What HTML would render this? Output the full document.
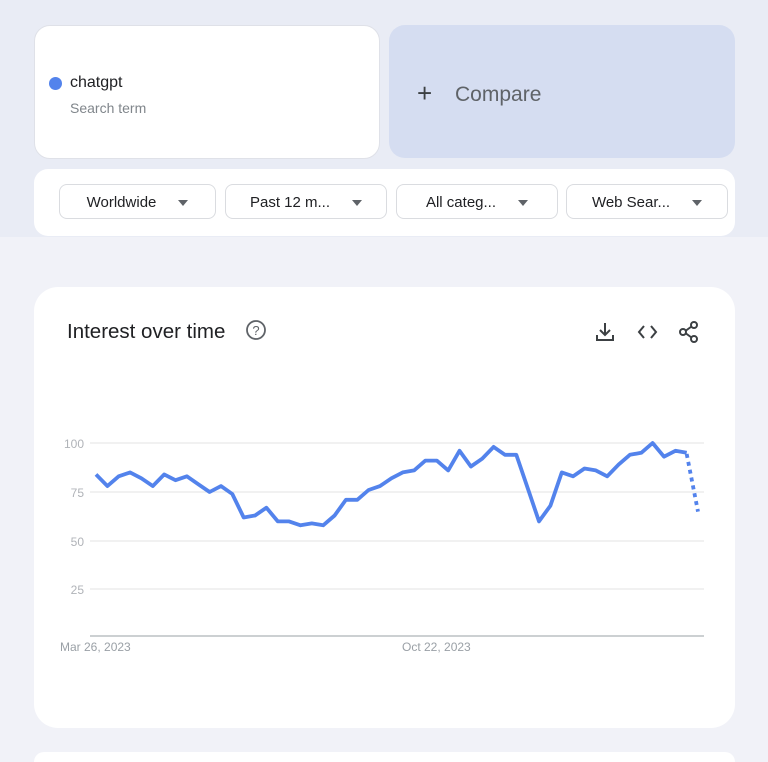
<!DOCTYPE html>
<html><head><meta charset="utf-8"><style>
body{margin:0;width:768px;height:757px;overflow:hidden;background:#f1f2f8;font-family:"Liberation Sans",sans-serif;position:relative}
.top{position:absolute;left:0;top:0;width:768px;height:237px;background:#e9ecf5}
.abs{position:absolute}
.card1{left:34px;top:25px;width:344px;height:132px;background:#fff;border:1px solid #dfe1e8;border-radius:16px}
.cmp{left:389px;top:25px;width:346px;height:133px;background:#d5ddf1;border-radius:16px}
.bar{left:34px;top:169px;width:701px;height:67px;background:#fff;border-radius:14px}
.chip{top:184px;height:35px;padding-top:2px;border:1px solid #dadce0;border-radius:8px;background:#fff;font-size:15px;color:#202124;display:flex;align-items:center;justify-content:center;box-sizing:border-box}
.chip i{display:inline-block;width:0;height:0;border-left:5px solid transparent;border-right:5px solid transparent;border-top:6px solid #5f6368;margin-left:22px}
.chart{left:34px;top:287px;width:701px;height:441px;background:#fff;border-radius:24px}
</style></head><body>
<div class="top"></div>
<div class="abs card1">
 <div class="abs" style="left:14px;top:51px;width:13px;height:13px;border-radius:50%;background:#5383ec"></div>
 <div class="abs" style="left:35px;top:48px;font-size:16px;color:#202124">chatgpt</div>
 <div class="abs" style="left:35px;top:74px;font-size:14px;color:#80868b">Search term</div>
</div>
<div class="abs cmp">
 <div class="abs" style="left:28px;top:55px;font-size:26px;color:#3c4043;line-height:26px;font-weight:300">+</div>
 <div class="abs" style="left:66px;top:58px;font-size:21px;color:#5f6368">Compare</div>
</div>
<div class="abs bar"></div>
<div class="abs chip" style="left:59px;width:157px">Worldwide<i></i></div>
<div class="abs chip" style="left:225px;width:162px">Past 12 m...<i></i></div>
<div class="abs chip" style="left:396px;width:162px">All categ...<i></i></div>
<div class="abs chip" style="left:566px;width:162px">Web Sear...<i></i></div>
<div class="abs chart"></div>
<div class="abs" style="left:34px;top:752px;width:701px;height:10px;background:#fff;border-radius:12px 12px 0 0"></div>
<div class="abs" style="left:67px;top:320px;font-size:20.5px;color:#202124">Interest over time</div>
<svg class="abs" style="left:0;top:0" width="768" height="757">
 <circle cx="256" cy="330" r="9" fill="none" stroke="#5f6368" stroke-width="1.8"/>
 <text x="256" y="335" font-size="13" fill="#5f6368" text-anchor="middle" font-family="Liberation Sans">?</text>
 <g stroke="#3c4043" stroke-width="2" fill="none">
  <path d="M605 323v12M600 330l5 5 5-5M597 335v5h16v-5"/>
  <path d="M644 326l-5 6 5 6M651 326l5 6-5 6"/>
  <circle cx="694" cy="325" r="3"/><circle cx="683" cy="332" r="3"/><circle cx="694" cy="339" r="3"/>
  <path d="M686 330.5l5.5-4M686 333.5l5.5 4"/>
 </g>
 <g stroke="#e3e3e3" stroke-width="1">
  <line x1="90" y1="443" x2="704" y2="443"/><line x1="90" y1="492" x2="704" y2="492"/>
  <line x1="90" y1="541" x2="704" y2="541"/><line x1="90" y1="589" x2="704" y2="589"/>
 </g>
 <line x1="90" y1="636" x2="704" y2="636" stroke="#9aa0a6" stroke-width="1"/>
 <g font-size="12" fill="#b0b3b8" font-family="Liberation Sans" text-anchor="end">
  <text x="84" y="448">100</text><text x="84" y="497">75</text><text x="84" y="546">50</text><text x="84" y="594">25</text>
 </g>
 <g font-size="12" fill="#9aa0a6" font-family="Liberation Sans">
  <text x="60" y="651">Mar 26, 2023</text><text x="402" y="651">Oct 22, 2023</text>
 </g>
 <polyline fill="none" stroke="#5383ec" stroke-width="3.8" stroke-linejoin="round" points="96,474.4 107.4,486.1 118.7,476.3 130.1,472.4 141.4,478.3 152.8,486.1 164.2,474.4 175.5,480.2 186.9,476.3 198.2,484.2 209.6,492 221,486.1 232.3,494 243.7,517.5 255,515.5 266.4,507.7 277.8,521.4 289.1,521.4 300.5,525.3 311.8,523.4 323.2,525.3 334.6,515.5 345.9,499.8 357.3,499.8 368.6,490 380,486.1 391.4,478.3 402.7,472.4 414.1,470.4 425.4,460.6 436.8,460.6 448.2,470.4 459.5,450.8 470.9,466.5 482.2,458.7 493.6,446.9 505,454.8 516.3,454.8 527.7,488.1 539,521.4 550.4,505.7 561.8,472.4 573.1,476.3 584.5,468.5 595.8,470.4 607.2,476.3 618.6,464.6 629.9,454.8 641.3,452.8 652.6,443 664,456.7 675.4,450.8 686.7,452.8"/>
 <line x1="686.7" y1="454" x2="698" y2="511.6" stroke="#5383ec" stroke-width="3.8" stroke-dasharray="4,4"/>
</svg>
</body></html>
